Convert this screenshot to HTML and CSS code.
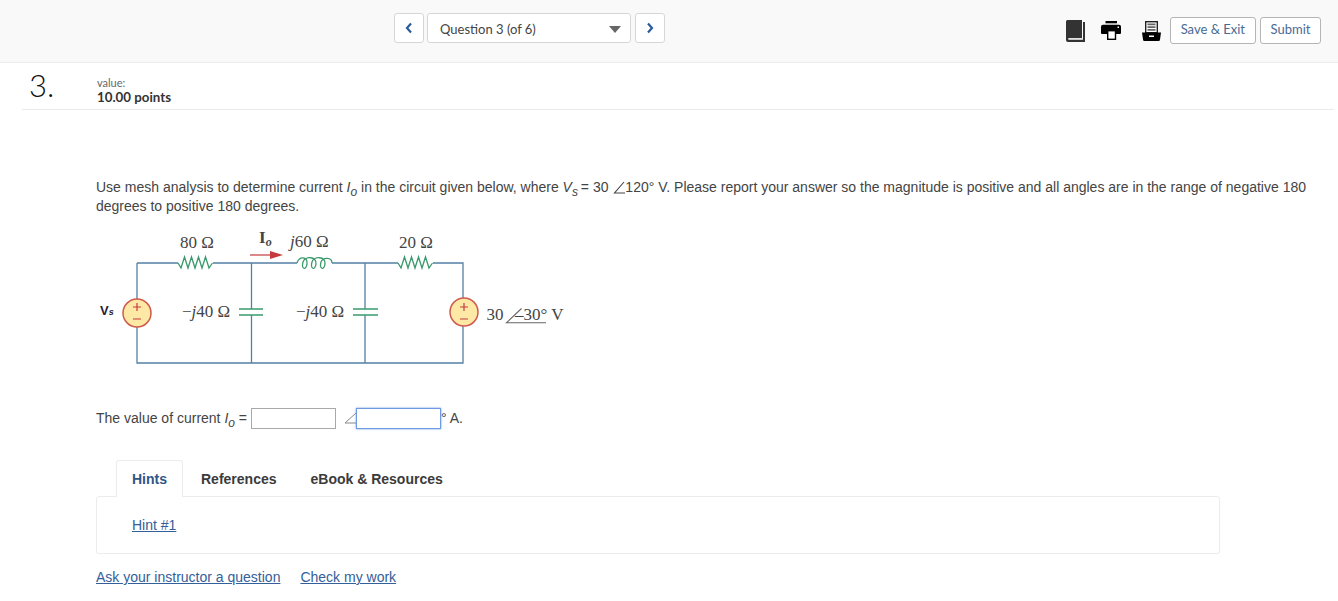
FILE: index.html
```html
<!DOCTYPE html>
<html lang="en">

<head>
    <meta charset="UTF-8">
    <title>Question 3 (of 6)</title>
    <link rel="stylesheet" href="styles.css">
</head>

<body>
    <header class="top-bar">
        <nav class="question-nav">
            <button class="nav-btn" aria-label="Previous">
                <svg width="8" height="12" viewBox="0 0 8 12"><path d="M6 1.500 2 6l4 4.500" fill="none" stroke="#2a5b9c" stroke-width="2.200"/></svg>
            </button>
            <div class="question-select">
                <span>Question 3 (of 6)</span>
                <i class="caret"></i>
            </div>
            <button class="nav-btn" aria-label="Next">
                <svg width="8" height="12" viewBox="0 0 8 12"><path d="M2 1.500 6 6l-4 4.500" fill="none" stroke="#2a5b9c" stroke-width="2.200"/></svg>
            </button>
        </nav>
        <div class="tools">
            <svg class="tool-book" width="19" height="22" viewBox="0 0 19 22">
                <path d="M1.500 0H16v18H2.500v1.500H17V2h2v20H2a2 2 0 0 1-2-2V1.500A1.500 1.500 0 0 1 1.500 0z" fill="#333"/>
                <rect x="2.500" y="18.200" width="14.500" height="1.500" fill="#ddd"/>
            </svg>
            <svg class="tool-print" width="20" height="19" viewBox="0 0 20 19">
                <rect x="4.500" y="0" width="11.500" height="2.300" fill="#000"/>
                <path d="M2 3.700h16a2 2 0 0 1 2 2V12a1 1 0 0 1-1 1H1a1 1 0 0 1-1-1V5.700a2 2 0 0 1 2-2z" fill="#000"/>
                <rect x="6.700" y="9.700" width="7.800" height="8.600" fill="#fff" stroke="#000" stroke-width="1.400"/>
                <rect x="16.500" y="5.500" width="1.500" height="1.500" fill="#fff"/>
            </svg>
            <svg class="tool-save" width="19" height="20" viewBox="0 0 19 20">
                <rect x="3.700" y="0.700" width="11.600" height="11" fill="#fff" stroke="#222" stroke-width="1.400"/>
                <path d="M5.500 2.500h8v1.700h-8zM5.500 5.300h8V7h-8zM5.500 8.100h8v1.700h-8z" fill="#666"/>
                <path d="M0 11.500h19l-1 7a1.500 1.500 0 0 1-1.500 1.500h-14A1.500 1.500 0 0 1 1 18.500z" fill="#000"/>
                <rect x="7" y="14.500" width="5" height="1.500" fill="#fff"/>
            </svg>
            <button class="text-btn save-btn">Save &amp; Exit</button>
            <button class="text-btn submit-btn">Submit</button>
        </div>
    </header>

    <div class="question-head">
        <div class="question-number">3.</div>
        <div class="question-value">
            <div class="value-label">value:</div>
            <div class="value-points">10.00 points</div>
        </div>
    </div>

    <main class="question-body">
        <p class="prompt">Use mesh analysis to determine current <em>I</em><sub>o</sub> in the circuit given below, where <em>V</em><sub class="sub-tight">s</sub> = 30 <svg class="angle" width="13" height="13" viewBox="0 0 13 13"><path d="M12 1 2.500 12H13" fill="none" stroke="#444" stroke-width="1.100"/></svg>120° V. Please report your answer so the magnitude is positive and all angles are in the range of negative 180 degrees to positive 180 degrees.</p>

        <svg class="circuit" width="480" height="142" viewBox="0 0 480 142">
            <g fill="none" stroke="#5480a6" stroke-width="1.300">
                <path d="M41 35H82M117 35H201M236 35H302M337 35H367V135H41V35"/>
                <path d="M155.500 35V81M155.500 87V135M269 35V81M269 87V135"/>
            </g>
            <g fill="none" stroke="#3a9a6c" stroke-width="1.300">
                <path d="M82 35l3 5 3.500-11 3.500 11 3.500-11 3.500 11 3.500-11 3.500 11 3.500-11 3.500 11 3.500-5"/>
                <path d="M302 35l3 5 3.500-11 3.500 11 3.500-11 3.500 11 3.500-11 3.500 11 3.500-11 3.500 11 3.500-5"/>
                <path d="M201 35C203 28 212 28 211 36C210 43 205 41 207 34C209 28 221 28 220 36C219 43 214 41 216 34C218 28 230 28 229 36C228 43 223 41 225 34C227 29 236 29 236 35"/>
                <path d="M143 81h24M143 87h24M257 81h25M257 87h25"/>
            </g>
            <path d="M154 27h22" stroke="#c63a3e" stroke-width="1.200"/>
            <path d="M174 23l13 4-13 4z" fill="#c63a3e"/>
            <g fill="#fde9a5" stroke="#cf5b4c" stroke-width="1.500">
                <circle cx="41" cy="85" r="14"/>
                <circle cx="368" cy="84" r="14"/>
            </g>
            <path d="M37 79h8M41 75v8M37 91h8M364 79h8M368 75v8M364 91h8" fill="none" stroke="#c63a3e" stroke-width="1.200"/>
            <g class="circuit-label">
                <text x="84" y="20">80 Ω</text>
                <text x="303" y="20">20 Ω</text>
                <text x="194" y="19"><tspan font-style="italic">j</tspan>60 Ω</text>
                <text x="86" y="89">−<tspan font-style="italic">j</tspan>40 Ω</text>
                <text x="200" y="89">−<tspan font-style="italic">j</tspan>40 Ω</text>
                <text x="390.500" y="92">30</text>
                <text x="419" y="92" font-size="16.500">–30° V</text>
                <text x="163" y="15" font-weight="bold">I<tspan font-style="italic" font-size="12" dy="3">o</tspan></text>
            </g>
            <path d="M425.500 80.500 410.500 94.700H450" fill="none" stroke="#666" stroke-width="1.100"/>
            <text class="vs-label" x="4" y="87">V<tspan font-size="9" font-style="italic">s</tspan></text>
        </svg>

        <div class="answer-line">
            <span>The value of current <em>I</em><sub>o</sub> =</span>
            <input class="answer-input" type="text">
            <svg class="angle-small" width="13" height="12" viewBox="0 0 13 12"><path d="M12 1 1 11h12" fill="none" stroke="#888" stroke-width="1"/></svg>
            <input class="answer-input answer-focus" type="text">
            <span class="unit">° A.</span>
        </div>

        <div class="tabs">
            <div class="tab tab-active">Hints</div>
            <div class="tab">References</div>
            <div class="tab">eBook &amp; Resources</div>
        </div>
        <div class="tab-panel">
            <a href="#hint">Hint #1</a>
        </div>
        <div class="help-links">
            <a href="#ask">Ask your instructor a question</a>
            <a href="#check">Check my work</a>
        </div>
    </main>
</body>
</html>
```

FILE: styles.css
```css
body {
    margin: 0;
    font-family: "Liberation Sans", Arial, sans-serif;
    font-size: 14px;
    color: #444;
    background: #fff;
    overflow: hidden;
}

.top-bar {
    display: flex;
    align-items: flex-start;
    height: 63px;
    padding: 13px 17px 0 394px;
    box-sizing: border-box;
    background: #f9f9f9;
    border-bottom: 1px solid #ececec;
}

.question-nav {
    display: flex;
    align-items: center;
}

.nav-btn {
    display: flex;
    align-items: center;
    justify-content: center;
    width: 30px;
    height: 30px;
    padding: 0;
    background: #fff;
    border: 1px solid #d6d6d6;
    border-radius: 3px;
}

.question-select {
    display: flex;
    align-items: center;
    justify-content: space-between;
    width: 204px;
    height: 30px;
    box-sizing: border-box;
    margin: 0 4px 0 3px;
    padding: 1px 9px 0 12px;
    background: #fff;
    border: 1px solid #d6d6d6;
    border-radius: 3px;
    font-family: Lato, sans-serif;
    font-size: 13px;
    color: #444;
}

.caret {
    width: 0;
    height: 0;
    border-left: 6px solid transparent;
    border-right: 6px solid transparent;
    border-top: 7px solid #666;
    margin-top: 1px;
}

.tools {
    display: flex;
    align-items: center;
    margin-left: auto;
    margin-top: 4px;
}

.tool-book {
    margin-right: 16px;
}

.tool-print {
    margin-right: 21px;
}

.tool-save {
    margin-right: 9px;
}

.text-btn {
    height: 27px;
    padding: 0 10px 3px;
    background: #fff;
    border: 1px solid #b5b5b5;
    border-radius: 3px;
    font-family: Lato, sans-serif;
    font-size: 13px;
    color: #4a6a94;
}

.save-btn {
    margin-right: 4px;
}

.submit-btn {
    width: 61px;
    padding: 0 0 3px;
}

.question-head {
    display: flex;
    height: 46px;
    margin: 0 4px 0 22px;
    border-bottom: 1px solid #eaeaea;
}

.question-number {
    width: 75px;
    padding-left: 7px;
    box-sizing: border-box;
    font-family: Lato, sans-serif;
    font-size: 31px;
    font-weight: 300;
    line-height: 45px;
    color: #111;
}

.question-value {
    padding-top: 13px;
    font-family: Lato, sans-serif;
}

.value-label {
    font-size: 11px;
    line-height: 13px;
    color: #666;
}

.value-points {
    font-size: 13.300px;
    font-weight: bold;
    line-height: 16px;
    color: #333;
}

.question-body {
    padding: 68px 28px 0 96px;
}

.prompt {
    margin: 0;
    line-height: 19px;
}

sub {
    font-size: 12px;
    font-style: italic;
    line-height: 0;
}

.sub-tight {
    margin-right: -1px;
}

.angle {
    vertical-align: -2px;
}

.circuit {
    display: block;
    margin: 12px 0 0 0;
}

.circuit-label text {
    font-family: "Liberation Serif", serif;
    font-size: 17px;
    fill: #444;
}

.vs-label {
    font-family: "Liberation Sans", sans-serif;
    font-size: 13px;
    font-weight: bold;
    fill: #223;
}

.answer-line {
    display: flex;
    align-items: center;
    height: 24px;
    margin-top: 36px;
    white-space: pre;
}

.answer-input {
    width: 85px;
    height: 21px;
    box-sizing: border-box;
    margin: 0 0 0 4px;
    padding: 0;
    background: #fff;
    border: 1px solid #a9a9a9;
}

.answer-focus {
    margin-left: -1px;
    border-color: #6d9ae0;
    box-shadow: 0 0 2px #6d9ae0;
}

.angle-small {
    margin: 0 0 0 8px;
}

.tabs {
    display: flex;
    margin: 30px 0 0 20px;
    font-weight: bold;
    color: #3b3b3b;
}

.tab {
    padding: 2px 17px 0;
    line-height: 33px;
    border-top: 1px solid transparent;
}

.tab-active {
    padding: 2px 15px 0;
    margin: 0 1px -1px 0;
    position: relative;
    background: #fff;
    border: 1px solid #ececec;
    border-bottom: none;
    border-radius: 3px 3px 0 0;
    color: #2f5688;
}

.tab-panel {
    width: 1124px;
    height: 58px;
    box-sizing: border-box;
    padding: 20px 35px;
    border: 1px solid #ececec;
    border-radius: 3px;
}

a {
    color: #33609a;
}

.help-links {
    display: flex;
    gap: 20px;
    margin-top: 15px;
}
```
